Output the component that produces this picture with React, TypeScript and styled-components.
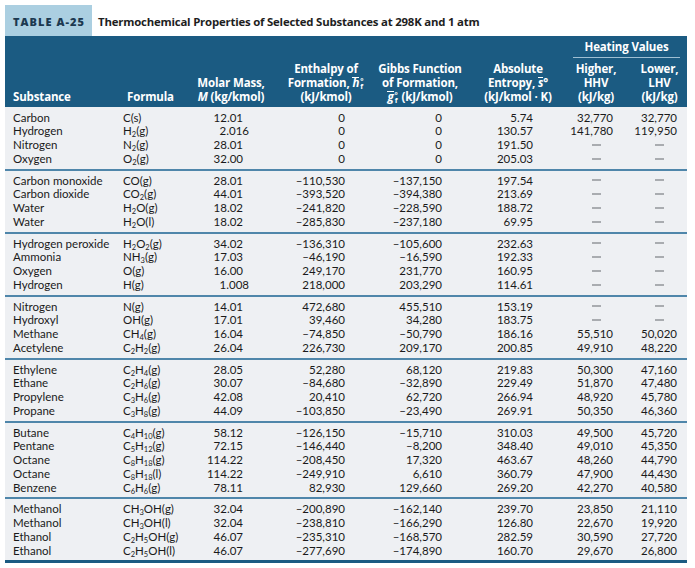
import React from "react";
import styled, { createGlobalStyle } from "styled-components";

const GlobalStyle = createGlobalStyle`
  body {
    margin: 0;
    background: #ffffff;
  }
`;

// column widths, chosen so the header centres and number edges line up
const COLS = "113px 72px 82px 108px 80px 100px 72px 55px";
// padding-right of the numeric columns (3..8)
const NUM_PAD = [29, 35, 18, 27, 19, 10];

type Row = [string, string, string, string, string, string, string?, string?];

const groups: Row[][] = [
  [
    ["Carbon", "C(s)", "12.01", "0", "0", "5.74", "32,770", "32,770"],
    ["Hydrogen", "H2(g)", "2.016", "0", "0", "130.57", "141,780", "119,950"],
    ["Nitrogen", "N2(g)", "28.01", "0", "0", "191.50"],
    ["Oxygen", "O2(g)", "32.00", "0", "0", "205.03"],
  ],
  [
    ["Carbon monoxide", "CO(g)", "28.01", "–110,530", "–137,150", "197.54"],
    ["Carbon dioxide", "CO2(g)", "44.01", "–393,520", "–394,380", "213.69"],
    ["Water", "H2O(g)", "18.02", "–241,820", "–228,590", "188.72"],
    ["Water", "H2O(l)", "18.02", "–285,830", "–237,180", "69.95"],
  ],
  [
    ["Hydrogen peroxide", "H2O2(g)", "34.02", "–136,310", "–105,600", "232.63"],
    ["Ammonia", "NH3(g)", "17.03", "–46,190", "–16,590", "192.33"],
    ["Oxygen", "O(g)", "16.00", "249,170", "231,770", "160.95"],
    ["Hydrogen", "H(g)", "1.008", "218,000", "203,290", "114.61"],
  ],
  [
    ["Nitrogen", "N(g)", "14.01", "472,680", "455,510", "153.19"],
    ["Hydroxyl", "OH(g)", "17.01", "39,460", "34,280", "183.75"],
    ["Methane", "CH4(g)", "16.04", "–74,850", "–50,790", "186.16", "55,510", "50,020"],
    ["Acetylene", "C2H2(g)", "26.04", "226,730", "209,170", "200.85", "49,910", "48,220"],
  ],
  [
    ["Ethylene", "C2H4(g)", "28.05", "52,280", "68,120", "219.83", "50,300", "47,160"],
    ["Ethane", "C2H6(g)", "30.07", "–84,680", "–32,890", "229.49", "51,870", "47,480"],
    ["Propylene", "C3H6(g)", "42.08", "20,410", "62,720", "266.94", "48,920", "45,780"],
    ["Propane", "C3H8(g)", "44.09", "–103,850", "–23,490", "269.91", "50,350", "46,360"],
  ],
  [
    ["Butane", "C4H10(g)", "58.12", "–126,150", "–15,710", "310.03", "49,500", "45,720"],
    ["Pentane", "C5H12(g)", "72.15", "–146,440", "–8,200", "348.40", "49,010", "45,350"],
    ["Octane", "C8H18(g)", "114.22", "–208,450", "17,320", "463.67", "48,260", "44,790"],
    ["Octane", "C8H18(l)", "114.22", "–249,910", "6,610", "360.79", "47,900", "44,430"],
    ["Benzene", "C6H6(g)", "78.11", "82,930", "129,660", "269.20", "42,270", "40,580"],
  ],
  [
    ["Methanol", "CH3OH(g)", "32.04", "–200,890", "–162,140", "239.70", "23,850", "21,110"],
    ["Methanol", "CH3OH(l)", "32.04", "–238,810", "–166,290", "126.80", "22,670", "19,920"],
    ["Ethanol", "C2H5OH(g)", "46.07", "–235,310", "–168,570", "282.59", "30,590", "27,720"],
    ["Ethanol", "C2H5OH(l)", "46.07", "–277,690", "–174,890", "160.70", "29,670", "26,800"],
  ],
];

const Page = styled.div`
  padding: 5px;
  width: 682px;
`;

const TitleBar = styled.div`
  display: flex;
  align-items: stretch;
  height: 31px;
`;

const Tag = styled.div`
  width: 87px;
  background: #abcfe1;
  color: #1c3950;
  font-family: "Open Sans", "Liberation Sans", sans-serif;
  font-weight: 800;
  font-size: 11px;
  letter-spacing: 1.05px;
  display: flex;
  align-items: center;
  padding: 2px 0 0 8px;
  box-sizing: border-box;
  white-space: nowrap;
`;

const Title = styled.div`
  display: flex;
  align-items: center;
  padding: 2px 0 0 6px;
  font-family: "Open Sans", "Liberation Sans", sans-serif;
  font-weight: 700;
  font-size: 11.4px;
  letter-spacing: -0.2px;
  color: #1e1e1e;
  white-space: nowrap;
`;

const Head = styled.div`
  display: grid;
  grid-template-columns: ${COLS};
  grid-template-rows: auto auto;
  background: #1b5b82;
  color: #ffffff;
  font-family: "Open Sans", "Liberation Sans", sans-serif;
  font-weight: 700;
  font-size: 11.5px;
  letter-spacing: -0.15px;
  line-height: 14px;
  padding: 4px 0 3px;
`;

const HeadCell = styled.div<{ $left?: number; $align?: string }>`
  grid-row: 1 / 3;
  align-self: end;
  justify-self: ${(p) => (p.$align === "left" ? "start" : "center")};
  text-align: ${(p) => p.$align || "center"};
  padding-left: ${(p) => p.$left || 0}px;
  white-space: nowrap;
`;

const SpanHead = styled.div`
  grid-column: 7 / 9;
  grid-row: 1;
  margin: 0 7px 3.5px 13px;
  padding-bottom: 3px;
  border-bottom: 1.5px solid #9fbfd3;
  text-align: center;
`;

const SubHead = styled.div<{ $col: number }>`
  grid-column: ${(p) => p.$col};
  grid-row: 2;
  justify-self: center;
  text-align: center;
  white-space: nowrap;
`;

// italic letter with a bar over it (molar quantities)
const Bar = styled.span`
  display: inline-block;
  font-style: italic;
  line-height: 0.9;
  border-top: 1px solid currentColor;
`;

// stacked ° over a subscript f
const Script = styled.span`
  display: inline-block;
  font-size: 7.5px;
  line-height: 5px;
  height: 10px;
  vertical-align: -2px;
  margin: 0 1px 0 1px;
  text-align: center;
`;

const ScriptLine = styled.span`
  display: block;
`;

const Body = styled.div`
  background: #eef0f3;
  font-family: "Lato", "Liberation Sans", sans-serif;
  font-size: 11.5px;
  color: #1a1a1a;
  border-bottom: 3px solid #1b5b82;
`;

const Group = styled.div<{ $first?: boolean }>`
  padding: ${(p) => (p.$first ? "4px" : "3px")} 0 3px;
  border-top: ${(p) => (p.$first ? "none" : "2px solid #4f86aa")};
`;

const BodyRow = styled.div`
  display: grid;
  grid-template-columns: ${COLS};
  line-height: 13.75px;
  height: 13.75px;
`;

const TextCell = styled.div<{ $left: number }>`
  padding-left: ${(p) => p.$left}px;
  white-space: nowrap;
`;

const NumCell = styled.div<{ $right: number }>`
  text-align: right;
  padding-right: ${(p) => p.$right}px;
  white-space: nowrap;
`;

const DashCell = styled.div`
  display: flex;
  justify-content: center;
  align-items: center;
`;

const Dash = styled.span`
  width: 9px;
  height: 2px;
  background: #a9acb0;
`;

const Sub = styled.sub`
  font-size: 7.5px;
  line-height: 0;
  vertical-align: -2px;
`;

function Formula({ f }: { f: string }) {
  const parts = f.split(/(\d+)/);
  return (
    <>
      {parts.map((p, i) => (/^\d+$/.test(p) ? <Sub key={i}>{p}</Sub> : p))}
    </>
  );
}

function Value({ v, col }: { v?: string; col: number }) {
  if (v === undefined)
    return (
      <DashCell>
        <Dash />
      </DashCell>
    );
  // three-decimal molar masses sit one digit further right (decimal alignment)
  const shift = col === 0 && /\.\d{3}$/.test(v) ? 6 : 0;
  return <NumCell $right={NUM_PAD[col] - shift}>{v}</NumCell>;
}

const Standard = () => (
  <Script>
    <ScriptLine>°</ScriptLine>
    <ScriptLine>f</ScriptLine>
  </Script>
);

export default function App() {
  return (
    <Page>
      <GlobalStyle />
      <TitleBar>
        <Tag>TABLE A-25</Tag>
        <Title>Thermochemical Properties of Selected Substances at 298K and 1 atm</Title>
      </TitleBar>
      <Head>
        <HeadCell $align="left" $left={8}>
          Substance
        </HeadCell>
        <HeadCell $align="left" $left={9}>
          Formula
        </HeadCell>
        <HeadCell>
          Molar Mass,
          <br />
          <i>M</i> (kg/kmol)
        </HeadCell>
        <HeadCell>
          Enthalpy of
          <br />
          Formation, <Bar>h</Bar>
          <Standard />
          <br />
          (kJ/kmol)
        </HeadCell>
        <HeadCell>
          Gibbs Function
          <br />
          of Formation,
          <br />
          <Bar>g</Bar>
          <Standard /> (kJ/kmol)
        </HeadCell>
        <HeadCell $left={16}>
          Absolute
          <br />
          Entropy, <Bar>s</Bar>°
          <br />
          (kJ/kmol · K)
        </HeadCell>
        <SpanHead>Heating Values</SpanHead>
        <SubHead $col={7}>
          Higher,
          <br />
          HHV
          <br />
          (kJ/kg)
        </SubHead>
        <SubHead $col={8}>
          Lower,
          <br />
          LHV
          <br />
          (kJ/kg)
        </SubHead>
      </Head>
      <Body>
        {groups.map((g, gi) => (
          <Group key={gi} $first={gi === 0}>
            {g.map((r, ri) => (
              <BodyRow key={ri}>
                <TextCell $left={8}>{r[0]}</TextCell>
                <TextCell $left={5}>
                  <Formula f={r[1]} />
                </TextCell>
                {[2, 3, 4, 5, 6, 7].map((c) => (
                  <Value key={c} v={r[c]} col={c - 2} />
                ))}
              </BodyRow>
            ))}
          </Group>
        ))}
      </Body>
    </Page>
  );
}
